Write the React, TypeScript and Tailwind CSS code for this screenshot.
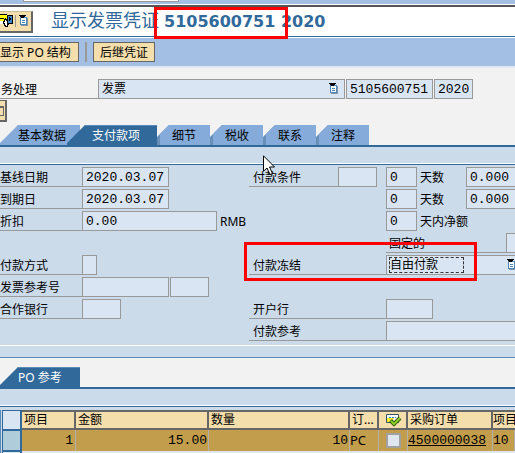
import type { ReactNode } from 'react'

const INPUT =
  'h-5 min-w-0 shrink-0 rounded-none border border-[#999999] bg-[#dae5f3] px-[3px] font-["Liberation_Mono","Noto_Sans_CJK_SC",monospace] text-[13px] leading-4 text-black outline-none'

// ── Icons ───────────────────────────────────────────────────────

function ListIcon() {
  return (
    <svg width="10" height="12" viewBox="0 0 10 12" shapeRendering="crispEdges" aria-hidden="true">
      <path d="M2 3h7v8h-7z" fill="#8796a5" />
      <path d="M1 2h7v8h-7z" fill="#4a86b8" />
      <path d="M2 3h5v6h-5z" fill="#fff" />
      <path d="M3 5h3v1h-3zM3 7h3v1h-3z" fill="#4a86b8" />
      <path d="M0 0h7v1h-1v1h-1v1h-3v-1h-1v-1h-1z" fill="#000" />
    </svg>
  )
}

function DocumentIcon() {
  return (
    <svg width="13" height="14" viewBox="0 0 13 14" shapeRendering="crispEdges" aria-hidden="true">
      <path d="M0 1h7v3l-2 4h-5z" fill="#ffff00" />
      <path d="M0 0h7v1h-7zM0 4h4v1h-4z" fill="#000" />
      <path d="M0 7h3v3h-3z" fill="#fff" />
      <path d="M3.500 8.500l2-4l3 4l-1 4h-2z" fill="#fff" stroke="#000" />
      <path d="M7 1h6v9h-6z" fill="#000" />
      <path d="M8 2h4v7h-4z" fill="#3d84c6" />
      <path d="M9 3h1v1h1v2h-1v1h-1z" fill="#000" />
    </svg>
  )
}

function CheckIcon() {
  return (
    <svg width="16" height="14" viewBox="0 0 16 14" aria-hidden="true">
      <path d="M.5 1.5h12v8h-12z" fill="#fff" stroke="#35506b" />
      <path d="M1 5h7l-2 4h-5z" fill="#ffee22" />
      <path d="M3 4.5h7" stroke="#2f7fc4" strokeDasharray="2 1" />
      <path d="M4.500 7.500l3.500 3.500l6-6" fill="none" stroke="#2f5510" strokeWidth="4" />
      <path d="M5 8l3 3l6-6" fill="none" stroke="#8fd024" strokeWidth="2" />
    </svg>
  )
}

// ── Form parts ──────────────────────────────────────────────────

type FieldProps = { id?: string; label?: string; value?: string; width: string }

function Field({ id, label, value = '', width }: FieldProps) {
  return <input id={id} aria-label={label} readOnly defaultValue={value} className={`${INPUT} ${width}`} />
}

function FieldLabel({ htmlFor, className, children }: { htmlFor: string; className: string; children: ReactNode }) {
  return (
    <label htmlFor={htmlFor} className={`h-5 shrink-0 whitespace-nowrap border-b border-[#999999] leading-[22px] ${className}`}>
      {children}
    </label>
  )
}

const LEFT_LABEL = 'w-[82px]'
const SIDE_TEXT = 'pl-[3px] leading-[22px]'

function Row({ children }: { children?: ReactNode }) {
  return <div className="flex h-5">{children}</div>
}

// ── Tabs ────────────────────────────────────────────────────────

function SlantTab({ label, active, className }: { label: string; active: boolean; className: string }) {
  return (
    <button
      role="tab"
      aria-selected={active}
      className={`h-5 shrink-0 border-t text-left leading-5 [clip-path:polygon(18px_0,100%_0,100%_100%,0_100%,0_18px)] ${
        active ? 'border-[#5b8bb8] bg-[#316a9a] text-white' : 'border-[#84abd9] bg-[#84abd9]'
      } ${className}`}
    >
      {label}
    </button>
  )
}

function PlainTab({ label }: { label: string }) {
  return (
    <button
      role="tab"
      aria-selected={false}
      className="h-5 w-[53px] shrink-0 bg-[#6690b8] [clip-path:polygon(12px_0,100%_0,100%_100%,0_100%,0_12px)]"
    >
      <span className="ml-[3px] block h-5 bg-[#84abd9] pl-3 text-left leading-[22px]">{label}</span>
    </button>
  )
}

// ── Items table ─────────────────────────────────────────────────

const TH_BASE =
  'h-5 whitespace-nowrap border-y-2 border-[#666666] bg-[#f4deac] p-0 text-left font-normal'
const TH = `${TH_BASE} border-r-2 pl-0.5`
const TD = 'h-[21px] border-r border-[#b0b0b0] bg-[#c29d4b] p-0 font-["Liberation_Mono",monospace] text-[13px]'

function ItemsTable() {
  return (
    <table className="w-full table-fixed border-separate border-spacing-0 leading-4">
      <colgroup>
        <col className="w-5" />
        <col className="w-[54px]" />
        <col className="w-[133px]" />
        <col className="w-[141px]" />
        <col className="w-[29px]" />
        <col className="w-[29px]" />
        <col className="w-[85px]" />
        <col />
      </colgroup>
      <thead>
        <tr>
          <th aria-label="选择" className="border border-r-2 border-[#316a9a] bg-[#dae5f3] p-0" />
          <th className={TH}>项目</th>
          <th className={TH}>金额</th>
          <th className={TH}>数量</th>
          <th className={TH}>订...</th>
          <th className={TH} aria-label="标记">
            <div className="flex justify-center">
              <CheckIcon />
            </div>
          </th>
          <th className={TH}>采购订单</th>
          <th className={TH_BASE}>项目</th>
        </tr>
      </thead>
      <tbody>
        <tr>
          <td className="border border-r-2 border-[#316a9a] bg-[#aeccd9] p-0" />
          <td className={`${TD} pr-0.5 text-right`}>1</td>
          <td className={`${TD} pr-px text-right`}>15.00</td>
          <td className={`${TD} pr-px text-right`}>10</td>
          <td className={`${TD} font-["Noto_Sans",sans-serif] text-xs`}>PC</td>
          <td className={TD}>
            <input
              type="checkbox"
              aria-label="标记"
              className="mx-auto block size-[15px] appearance-none border-2 border-[#a0a0a0] bg-[#dfe6ed]"
            />
          </td>
          <td className={TD}>
            <a href="#po" className="underline">4500000038</a>
          </td>
          <td className={TD}>10</td>
        </tr>
        <tr>
          <td className="h-[21px] border border-r-2 border-[#316a9a] bg-[#dae5f3] p-0" />
          <td colSpan={7} className="bg-[#dfe6ed] p-0" />
        </tr>
      </tbody>
    </table>
  )
}

export default function App() {
  return (
    <main className='relative h-screen overflow-hidden bg-[#f2f2f2] font-["Noto_Sans","Noto_Sans_CJK_SC",sans-serif] text-xs text-black'>
      {/* Command bar */}
      <div className="h-1 bg-[#a3c0e4] pl-[23px]">
        <div className="h-0.5 w-[156px] border-x border-b border-[#999999] bg-white" />
      </div>

      {/* Title */}
      <header className="h-[34px] border-t border-white bg-white">
        <div className="flex h-8 items-center border-b border-t-2 border-b-[#316a9a] border-t-[#555555]">
          <div className="flex h-[22px] w-[33px] shrink-0 items-center gap-0.5 border-y border-b-2 border-r-2 border-[#666666] border-t-[#c9bb94] bg-[#f4deac]">
            <button aria-label="凭证"><DocumentIcon /></button>
            <button aria-label="列表" className="border-l border-[#999999] pl-[3px]"><ListIcon /></button>
          </div>
          <h1 className='ml-[18px] flex items-baseline gap-[5px] whitespace-nowrap font-["DejaVu_Sans","Noto_Sans_CJK_SC",sans-serif] text-base leading-6 text-[#316a9a]'>
            <span className="text-lg leading-6">显示发票凭证</span>
            <span className="font-bold">5105600751 2020</span>
          </h1>
        </div>
      </header>

      {/* Application toolbar */}
      <div className="flex h-[30px] items-center gap-1.5 border-b-2 border-[#dfeaf6] bg-[#a3c0e4]">
        <button className="h-5 w-[79px] border border-l-0 border-[#666666] bg-[#f4deac] text-left leading-5">显示 PO 结构</button>
        <div className="h-5 w-0.5 bg-[#999999]" />
        <button className="h-5 w-[62px] border border-[#666666] bg-[#f4deac] leading-5">后继凭证</button>
      </div>

      {/* Transaction */}
      <section className="flex gap-px pt-[11px]">
        <div className="flex w-[345px]">
          <FieldLabel htmlFor="transaction" className="w-[98px] pl-px">务处理</FieldLabel>
          <div className="relative flex-1">
            <select id="transaction" className="h-5 w-full appearance-none rounded-none border border-[#999999] bg-[#dae5f3] px-[3px] leading-4">
              <option>发票</option>
            </select>
            <span className="pointer-events-none absolute right-1.5 top-1"><ListIcon /></span>
          </div>
        </div>
        <Field label="凭证编号" value="5105600751" width="w-[87px]" />
        <Field label="会计年度" value="2020" width="w-[39px]" />
      </section>
      <button aria-label="显示" className="mt-px flex h-[22px] w-[7px] items-center border-b-2 border-r-2 border-t border-[#666666] bg-[#f4deac]">
        <span className="h-2.5 w-1 border border-l-0 border-t-2 border-[#666666]" />
      </button>

      {/* Header data tabs */}
      <div role="tablist" className="mt-[3px] flex border-b-2 border-[#316a9a]">
        <SlantTab label="基本数据" active={false} className="w-20 pl-[18px]" />
        <SlantTab label="支付款项" active className="-ml-[13px] w-[90px] pl-[25px]" />
        <PlainTab label="细节" />
        <PlainTab label="税收" />
        <PlainTab label="联系" />
        <PlainTab label="注释" />
      </div>

      {/* Payment */}
      <section className="bg-[#ccdbea] pt-4">
        <div className="flex border-y border-white">
          <div className="flex w-full border-t border-[#316a9a] pb-1 pt-0.5">
            <div className="flex w-[249px] shrink-0 flex-col gap-0.5">
              <Row>
                <FieldLabel htmlFor="baseline" className={LEFT_LABEL}>基线日期</FieldLabel>
                <Field id="baseline" value="2020.03.07" width="w-[87px]" />
              </Row>
              <Row>
                <FieldLabel htmlFor="due" className={LEFT_LABEL}>到期日</FieldLabel>
                <Field id="due" value="2020.03.07" width="w-[87px]" />
              </Row>
              <Row>
                <FieldLabel htmlFor="discount" className={LEFT_LABEL}>折扣</FieldLabel>
                <Field id="discount" value="0.00" width="w-[135px]" />
                <span className={SIDE_TEXT}>RMB</span>
              </Row>
              <Row />
              <Row>
                <FieldLabel htmlFor="method" className={LEFT_LABEL}>付款方式</FieldLabel>
                <Field id="method" width="w-[15px]" />
              </Row>
              <Row>
                <FieldLabel htmlFor="invoice-ref" className={LEFT_LABEL}>发票参考号</FieldLabel>
                <div className="flex gap-px">
                  <Field id="invoice-ref" width="w-[87px]" />
                  <Field label="发票年度" width="w-[39px]" />
                </div>
              </Row>
              <Row>
                <FieldLabel htmlFor="bank" className={LEFT_LABEL}>合作银行</FieldLabel>
                <Field id="bank" width="w-[39px]" />
              </Row>
            </div>

            <div className="flex min-w-0 flex-1 flex-col gap-0.5">
              <Row>
                <FieldLabel htmlFor="terms" className="w-[89px] pl-1">付款条件</FieldLabel>
                <Field id="terms" width="w-[39px]" />
                <div className="ml-[9px] flex">
                  <Field id="days-1" value="0" width="w-[31px]" />
                  <label htmlFor="days-1" className={`w-[49px] ${SIDE_TEXT}`}>天数</label>
                  <Field label="折扣率 1" value="0.000" width="w-[60px]" />
                </div>
              </Row>
              <Row>
                <div className="ml-[137px] flex">
                  <Field id="days-2" value="0" width="w-[31px]" />
                  <label htmlFor="days-2" className={`w-[49px] ${SIDE_TEXT}`}>天数</label>
                  <Field label="折扣率 2" value="0.000" width="w-[60px]" />
                </div>
              </Row>
              <Row>
                <div className="ml-[137px] flex">
                  <Field id="net" value="0" width="w-[31px]" />
                  <label htmlFor="net" className={SIDE_TEXT}>天内净额</label>
                </div>
              </Row>
              <Row>
                <div className="ml-[137px] flex">
                  <FieldLabel htmlFor="fixed" className="w-[120px] pl-[3px]">固定的</FieldLabel>
                  <Field id="fixed" width="w-[39px]" />
                </div>
              </Row>
              <Row>
                <FieldLabel htmlFor="block" className="w-[137px] pl-1">付款冻结</FieldLabel>
                <div className="relative flex-1">
                  <select id="block" className="h-5 w-full appearance-none rounded-none border border-r-0 border-[#999999] bg-[#dae5f3] px-[3px] leading-4">
                    <option>自由付款</option>
                  </select>
                  <span className="pointer-events-none absolute left-[3px] top-0.5 h-4 w-[75px] border border-dashed border-[#333333]" />
                  <span className="pointer-events-none absolute -right-0.5 top-1"><ListIcon /></span>
                </div>
              </Row>
              <Row />
              <Row>
                <FieldLabel htmlFor="house-bank" className="w-[137px] pl-1">开户行</FieldLabel>
                <Field id="house-bank" width="w-[47px]" />
              </Row>
              <Row>
                <FieldLabel htmlFor="payment-ref" className="w-[137px] pl-1">付款参考</FieldLabel>
                <Field id="payment-ref" width="flex-1 border-r-0" />
              </Row>
            </div>
          </div>
        </div>
        <div className="h-3 border-b border-[#5b8bb8]" />
      </section>

      {/* PO reference */}
      <div role="tablist" className="flex border-b-2 border-[#316a9a] pt-[9px]">
        <SlantTab label="PO 参考" active className="w-20 pl-[18px]" />
      </div>
      <section className="bg-[#ccdbea] pt-4">
        <div className="border-t border-white">
          <div className="border-t border-[#316a9a] pt-[3px]">
            <div className="border-l border-[#5b8bb8] pl-px">
              <ItemsTable />
            </div>
          </div>
        </div>
      </section>

      {/* Highlights and pointer */}
      <div className="pointer-events-none absolute left-[154px] top-[7px] h-8 w-[134px] border-3 border-[#ff0000]" />
      <div className="pointer-events-none absolute left-[244px] top-[242px] h-[39px] w-[233px] border-3 border-[#ff0000]" />
      <svg className="pointer-events-none absolute left-[263px] top-[155px]" width="13" height="21" viewBox="0 0 13 21" aria-hidden="true">
        <path d="M.5 .8v15.5l3.5-3.3l3 6.5l2.5-1l-3-6.5h5z" fill="#fff" stroke="#000" />
      </svg>
    </main>
  )
}
